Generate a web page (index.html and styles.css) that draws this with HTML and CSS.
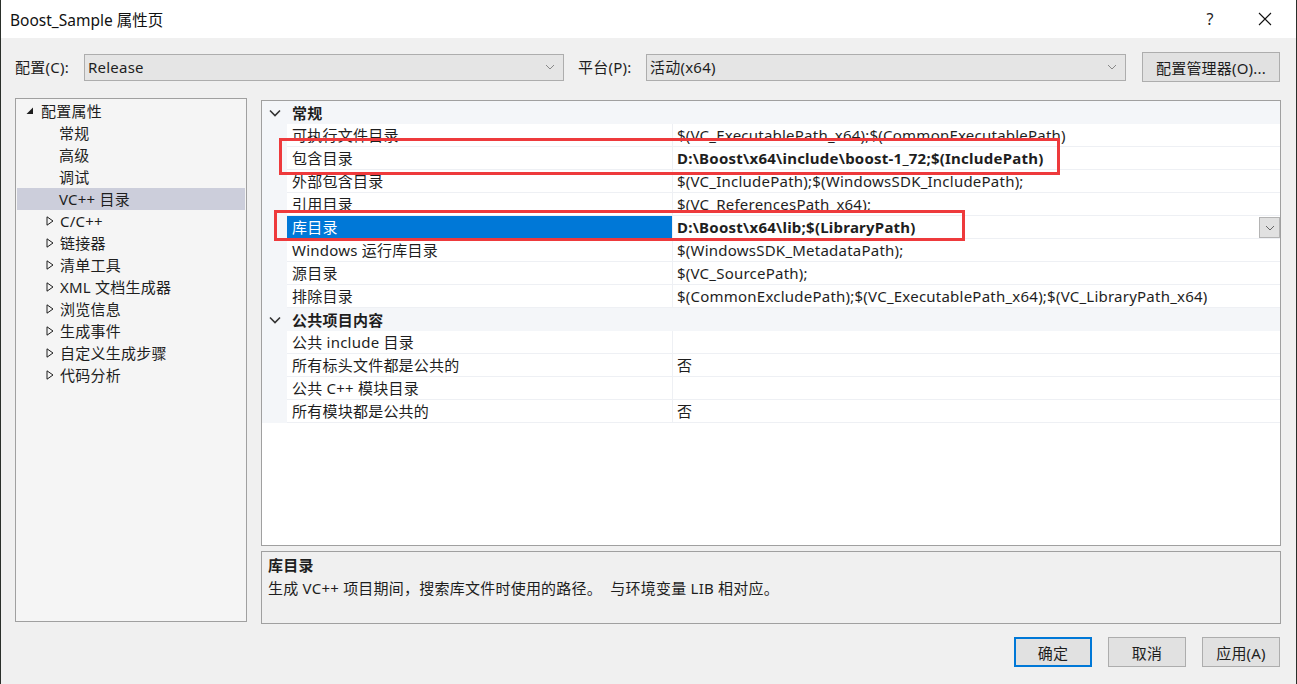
FILE: index.html
```html
<!DOCTYPE html>
<html lang="zh-CN">
<head>
    <meta charset="UTF-8">
    <title>Boost_Sample 属性页</title>
    <link rel="stylesheet" href="styles.css">
</head>
<body>
<div class="window">
    <div class="titlebar">
        <span class="title">Boost_Sample 属性页</span>
        <div class="caption-btns">
            <span class="help">?</span>
            <svg class="close" width="14" height="14" viewBox="0 0 14 14"><path d="M1 1L13 13M13 1L1 13" stroke="#111" stroke-width="1.1" fill="none"/></svg>
        </div>
    </div>

    <div class="body">
        <div class="toolbar">
            <span class="label label-config">配置(C):</span>
            <div class="combo">
                <span>Release</span>
                <svg class="chev" width="10" height="6" viewBox="0 0 10 6"><path d="M1 1L5 5L9 1" stroke="#888" fill="none"/></svg>
            </div>
            <span class="label label-platform">平台(P):</span>
            <div class="combo">
                <span>活动(x64)</span>
                <svg class="chev" width="10" height="6" viewBox="0 0 10 6"><path d="M1 1L5 5L9 1" stroke="#888" fill="none"/></svg>
            </div>
            <button class="btn btn-manager">配置管理器(O)...</button>
        </div>

        <div class="main">
            <div class="tree">
                <div class="tree-item root">
                    <svg class="tri" width="8" height="8" viewBox="0 0 8 8"><path d="M7 0.5V7H0.5Z" fill="#1e1e1e"/></svg>
                    <span>配置属性</span>
                </div>
                <div class="tree-item child">常规</div>
                <div class="tree-item child">高级</div>
                <div class="tree-item child">调试</div>
                <div class="tree-item child selected">VC++ 目录</div>
                <div class="tree-item branch"><svg class="tri-o" width="8" height="10" viewBox="0 0 8 10"><path d="M1 0.8V9.2L7 5Z" fill="none" stroke="#1e1e1e"/></svg><span>C/C++</span></div>
                <div class="tree-item branch"><svg class="tri-o" width="8" height="10" viewBox="0 0 8 10"><path d="M1 0.8V9.2L7 5Z" fill="none" stroke="#1e1e1e"/></svg><span>链接器</span></div>
                <div class="tree-item branch"><svg class="tri-o" width="8" height="10" viewBox="0 0 8 10"><path d="M1 0.8V9.2L7 5Z" fill="none" stroke="#1e1e1e"/></svg><span>清单工具</span></div>
                <div class="tree-item branch"><svg class="tri-o" width="8" height="10" viewBox="0 0 8 10"><path d="M1 0.8V9.2L7 5Z" fill="none" stroke="#1e1e1e"/></svg><span>XML 文档生成器</span></div>
                <div class="tree-item branch"><svg class="tri-o" width="8" height="10" viewBox="0 0 8 10"><path d="M1 0.8V9.2L7 5Z" fill="none" stroke="#1e1e1e"/></svg><span>浏览信息</span></div>
                <div class="tree-item branch"><svg class="tri-o" width="8" height="10" viewBox="0 0 8 10"><path d="M1 0.8V9.2L7 5Z" fill="none" stroke="#1e1e1e"/></svg><span>生成事件</span></div>
                <div class="tree-item branch"><svg class="tri-o" width="8" height="10" viewBox="0 0 8 10"><path d="M1 0.8V9.2L7 5Z" fill="none" stroke="#1e1e1e"/></svg><span>自定义生成步骤</span></div>
                <div class="tree-item branch"><svg class="tri-o" width="8" height="10" viewBox="0 0 8 10"><path d="M1 0.8V9.2L7 5Z" fill="none" stroke="#1e1e1e"/></svg><span>代码分析</span></div>
            </div>

            <div class="right">
                <div class="propgrid">
                    <div class="cat-row">
                        <svg class="cat-chev" width="12" height="8" viewBox="0 0 12 8"><path d="M1 1.5L6 6.5L11 1.5" stroke="#333" stroke-width="1.6" fill="none"/></svg>
                        <span>常规</span>
                    </div>
                    <div class="row"><div class="name">可执行文件目录</div><div class="value">$(VC_ExecutablePath_x64);$(CommonExecutablePath)</div></div>
                    <div class="row"><div class="name">包含目录</div><div class="value bold">D:\Boost\x64\include\boost-1_72;$(IncludePath)</div></div>
                    <div class="row"><div class="name">外部包含目录</div><div class="value">$(VC_IncludePath);$(WindowsSDK_IncludePath);</div></div>
                    <div class="row"><div class="name">引用目录</div><div class="value">$(VC_ReferencesPath_x64);</div></div>
                    <div class="row active">
                        <div class="name">库目录</div>
                        <div class="value bold">D:\Boost\x64\lib;$(LibraryPath)</div>
                        <div class="drop-btn"><svg width="10" height="6" viewBox="0 0 10 6"><path d="M1 1L5 5L9 1" stroke="#666" fill="none"/></svg></div>
                    </div>
                    <div class="row"><div class="name">Windows 运行库目录</div><div class="value">$(WindowsSDK_MetadataPath);</div></div>
                    <div class="row"><div class="name">源目录</div><div class="value">$(VC_SourcePath);</div></div>
                    <div class="row"><div class="name">排除目录</div><div class="value">$(CommonExcludePath);$(VC_ExecutablePath_x64);$(VC_LibraryPath_x64)</div></div>
                    <div class="cat-row">
                        <svg class="cat-chev" width="12" height="8" viewBox="0 0 12 8"><path d="M1 1.5L6 6.5L11 1.5" stroke="#333" stroke-width="1.6" fill="none"/></svg>
                        <span>公共项目内容</span>
                    </div>
                    <div class="row"><div class="name">公共 include 目录</div><div class="value"></div></div>
                    <div class="row"><div class="name">所有标头文件都是公共的</div><div class="value">否</div></div>
                    <div class="row"><div class="name">公共 C++ 模块目录</div><div class="value"></div></div>
                    <div class="row"><div class="name">所有模块都是公共的</div><div class="value">否</div></div>

                    <div class="mark mark-include"></div>
                    <div class="mark mark-lib"></div>
                </div>

                <div class="desc">
                    <div class="desc-title">库目录</div>
                    <div class="desc-text">生成 VC++ 项目期间，搜索库文件时使用的路径。&nbsp; 与环境变量 LIB 相对应。</div>
                </div>
            </div>
        </div>

        <div class="footer">
            <button class="btn btn-default">确定</button>
            <button class="btn">取消</button>
            <button class="btn">应用(A)</button>
        </div>
    </div>
</div>
</body>
</html>
```

FILE: styles.css
```css
* {
    margin: 0;
    padding: 0;
    box-sizing: border-box;
}

body {
    font-family: "Noto Sans", "Noto Sans CJK SC", sans-serif;
    font-size: 15px;
    letter-spacing: 0.23px;
    color: #1e1e1e;
    background: #f0f0f0;
    width: 1297px;
    height: 684px;
    overflow: hidden;
}

.window {
    height: 684px;
    border-left: 1px solid #2a2f2a;
    border-right: 1px solid #2a2f2a;
    background: #f0f0f0;
}

.titlebar {
    height: 38px;
    background: #ffffff;
    display: flex;
    align-items: center;
    justify-content: space-between;
    padding-left: 9px;
}

.title {
    font-size: 15.5px;
    letter-spacing: 0;
    color: #111;
}

.caption-btns {
    display: flex;
    align-items: center;
    height: 100%;
}

.help {
    width: 46px;
    text-align: center;
    font-size: 16px;
    color: #222;
    margin-right: 25px;
}

.close {
    margin-right: 24px;
}

.body {
    padding: 14px 15px 0 14px;
}

.toolbar {
    display: flex;
    align-items: center;
    height: 30px;
}

.label {
    line-height: 27px;
}

.label-config {
    width: 69px;
}

.label-platform {
    width: 68px;
    margin-left: 14px;
}

.combo {
    width: 480px;
    height: 27px;
    background: #e5e5e5;
    border: 1px solid #adadad;
    display: flex;
    align-items: center;
    justify-content: space-between;
    padding: 0 8px 0 3px;
}

.combo span {
    line-height: 25px;
}

.btn {
    font-family: inherit;
    font-size: 15px;
    letter-spacing: 0.2px;
    color: #1e1e1e;
    background: #e1e1e1;
    border: 1px solid #adadad;
    height: 30px;
    width: 78px;
}

.btn-manager {
    width: 138px;
    margin-left: 16px;
}

.btn-default {
    border: 2px solid #0078d7;
}

.main {
    display: flex;
    gap: 14px;
    margin-top: 16px;
}

.tree {
    width: 232px;
    height: 524px;
    background: #f5f5f5;
    border: 1px solid #a0a0a0;
    padding: 1px;
}

.tree-item {
    height: 22px;
    line-height: 22px;
    display: flex;
    align-items: center;
    white-space: nowrap;
}

.tree-item.root {
    padding-left: 9px;
}

.tree-item.root .tri {
    margin-right: 7px;
}

.tree-item.child {
    padding-left: 42px;
}

.tree-item.branch {
    padding-left: 29px;
}

.tree-item.branch .tri-o {
    margin-right: 6px;
}

.tree-item.selected {
    background: #cccedb;
}

.right {
    width: 1020px;
    margin-top: 2px;
    display: flex;
    flex-direction: column;
    gap: 5px;
}

.propgrid {
    position: relative;
    height: 446px;
    background: #ffffff;
    border: 1px solid #a0a0a0;
}

.cat-row {
    height: 23px;
    background: #f4f6f9;
    display: flex;
    align-items: center;
    font-weight: bold;
}

.cat-chev {
    margin-left: 7px;
    margin-right: 11px;
}

.row {
    height: 23px;
    display: flex;
    padding-left: 25px;
    background: #f4f6f9;
}

.row .name,
.row .value {
    background: #ffffff;
    border-bottom: 1px solid #eef0f4;
    line-height: 22px;
    white-space: nowrap;
    overflow: hidden;
}

.row .name {
    width: 386px;
    padding-left: 5px;
    border-right: 1px solid #eef0f4;
}

.row .value {
    flex: 1;
    padding-left: 4px;
}

.value.bold {
    font-weight: bold;
}

.row.active {
    position: relative;
}

.row.active .name {
    background: #0078d7;
    color: #ffffff;
}

.drop-btn {
    position: absolute;
    right: 0;
    top: 1px;
    width: 21px;
    height: 21px;
    background: #e1e1e1;
    border: 1px solid #b4b4b4;
    display: flex;
    align-items: center;
    justify-content: center;
}

.mark {
    position: absolute;
    border: 3px solid #ee3a3c;
}

.mark-include {
    left: 17px;
    top: 37px;
    width: 781px;
    height: 37px;
}

.mark-lib {
    left: 12px;
    top: 109px;
    width: 691px;
    height: 31px;
}

.desc {
    height: 73px;
    border: 1px solid #a0a0a0;
    background: #f0f0f0;
    padding: 1px 6px;
}

.desc-title {
    font-weight: bold;
    line-height: 24px;
}

.desc-text {
    line-height: 22px;
}

.footer {
    display: flex;
    justify-content: flex-end;
    gap: 16px;
    margin-top: 13px;
    padding-right: 1px;
}
```
